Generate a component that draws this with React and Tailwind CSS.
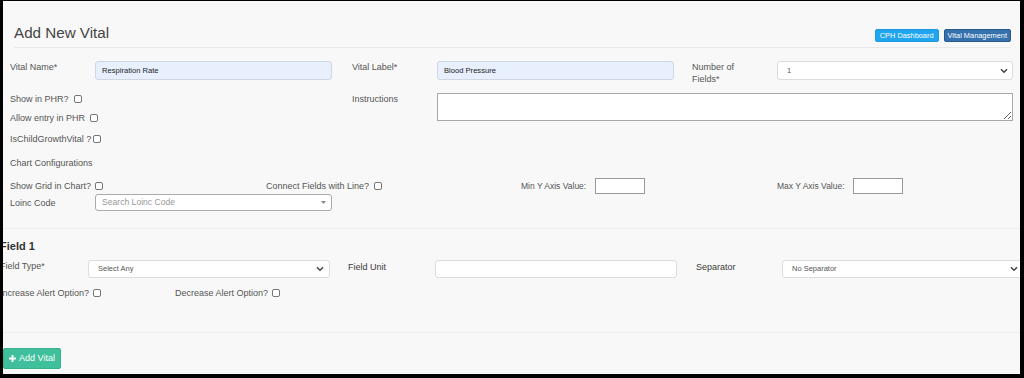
import React from 'react';

const label = 'text-[9px] leading-[12px] text-[#555]';

function Check() {
  return <span className="inline-block w-[8px] h-[8px] border border-[#767676] rounded-[2px] bg-white shrink-0" />;
}

function Chevron() {
  return (
    <svg width="8" height="6" viewBox="0 0 8 6" className="shrink-0">
      <path d="M1 1.2l3 3 3-3" fill="none" stroke="#444" strokeWidth="1.5" />
    </svg>
  );
}

function FakeSelect({ value, width, className = '' }) {
  return (
    <div className={`${width} shrink-0 h-[18px] bg-white border border-[#dcdcdc] rounded-[3px] flex items-center justify-between pl-[9px] pr-[5px] text-[7.5px] text-[#555] ${className}`}>
      <span>{value}</span>
      <Chevron />
    </div>
  );
}

export default function App() {
  return (
    <div className="h-[378px] w-[1024px] bg-black pt-px pl-[3px] pr-[4px] pb-[4px] font-['Liberation_Sans',Arial,sans-serif]">
      <div className="h-full bg-[#f8f8f8] overflow-hidden">
        {/* header */}
        <div className="ml-[11px] mr-[9px] h-[47px] border-b border-[#e9e9e9] flex justify-between items-start">
          <h1 className="mt-[23px] text-[15.2px] leading-[18px] text-[#444]">Add New Vital</h1>
          <div className="mt-[28px] flex gap-[5px]">
            <button className="h-[13px] px-[4px] rounded-[2px] bg-[#21a5ee] border border-[#1d9ae0] text-white text-[7.4px] leading-none">CPH Dashboard</button>
            <button className="h-[13px] px-[3px] rounded-[2px] bg-[#3471ad] border border-[#28598c] text-white text-[7.4px] leading-none">Vital Management</button>
          </div>
        </div>

        {/* row 1 */}
        <div className="mt-[13px] pl-[7px] flex items-start">
          <div className="w-[342px] flex">
            <div className={`w-[85px] ${label}`}>Vital Name*</div>
            <div className="w-[237px] h-[19px] bg-[#e8f0fe] border border-[#cfd7e3] rounded-[3px] flex items-center pl-[6px] text-[7.6px] text-[#222]">Respiration Rate</div>
          </div>
          <div className="w-[340px] flex">
            <div className={`w-[85px] ${label}`}>Vital Label*</div>
            <div className="w-[237px] h-[19px] bg-[#e8f0fe] border border-[#cfd7e3] rounded-[3px] flex items-center pl-[6px] text-[7.6px] text-[#222]">Blood Pressure</div>
          </div>
          <div className="flex">
            <div className={`w-[85px] ${label}`}>Number of<br />Fields*</div>
            <div className="w-[236px] h-[19px] bg-white border border-[#dcdcdc] rounded-[3px] flex items-center justify-between pl-[9px] pr-[4px] text-[7.5px] text-[#555]">
              <span>1</span>
              <Chevron />
            </div>
          </div>
        </div>

        {/* row 2 */}
        <div className="mt-[8px] pl-[7px] flex items-start">
          <div className="w-[342px]">
            <div className={`flex items-center gap-[5px] ${label}`}>Show in PHR? <Check /></div>
            <div className={`mt-[7px] flex items-center gap-[5px] ${label}`}>Allow entry in PHR <Check /></div>
          </div>
          <div className="flex">
            <div className={`w-[85px] ${label}`}>Instructions</div>
            <textarea className="w-[576px] h-[28px] bg-white border border-[#a8a8a8] outline-none" />
          </div>
        </div>

        <div className={`mt-[9px] pl-[7px] flex items-center gap-[2px] ${label}`}>IsChildGrowthVital ? <Check /></div>
        <div className={`mt-[12px] pl-[7px] ${label}`}>Chart Configurations</div>

        {/* chart row */}
        <div className={`mt-[9px] pl-[7px] h-[16px] grid grid-cols-[256px_255px_256px_auto] items-center ${label}`}>
          <div className="flex items-center gap-[4px]">Show Grid in Chart? <Check /></div>
          <div className="flex items-center gap-[5px]">Connect Fields with Line? <Check /></div>
          <div className="flex items-center gap-[9px] text-[8.5px]">Min Y Axis Value: <span className="w-[50px] h-[16px] bg-white border border-[#999]" /></div>
          <div className="flex items-center gap-[8px] text-[8.5px]">Max Y Axis Value: <span className="w-[50px] h-[16px] bg-white border border-[#999]" /></div>
        </div>

        {/* loinc */}
        <div className="pl-[7px] flex items-center">
          <div className={`w-[85px] ${label}`}>Loinc Code</div>
          <div className="w-[237px] h-[17px] bg-white border border-[#aaa] rounded-[3px] flex items-center justify-between pl-[6px] pr-[5px] text-[8.6px] text-[#999]">
            <span>Search Loinc Code</span>
            <svg width="5" height="3" viewBox="0 0 5 3"><path d="M0 0h5L2.5 3z" fill="#888" /></svg>
          </div>
        </div>

        <div className="mt-[17px] border-t border-[#ececec]" />

        {/* field 1 */}
        <div className="ml-[-3px]">
          <h2 className="mt-[11px] text-[11px] leading-[13px] font-bold text-[#333]">Field 1</h2>
          <div className="mt-[7px] flex items-start">
            <div className="w-[348px] shrink-0 flex">
              <div className={`w-[88px] shrink-0 ${label}`}>Field Type*</div>
              <FakeSelect value="Select Any" width="w-[242px]" />
            </div>
            <div className="w-[348px] shrink-0 flex">
              <div className="w-[87px] shrink-0 text-[9px] leading-[12px] text-[#3a3a3a] pt-[1px]">Field Unit</div>
              <div className="w-[242px] shrink-0 h-[18px] bg-white border border-[#dcdcdc] rounded-[3px]" />
            </div>
            <div className="flex shrink-0">
              <div className="w-[86px] shrink-0 text-[9px] leading-[12px] text-[#3a3a3a] pt-[1px]">Separator</div>
              <FakeSelect value="No Separator" width="w-[242px]" />
            </div>
          </div>
          <div className={`mt-[9px] flex items-center ${label}`}>
            <div className="w-[175px] flex items-center gap-[4px]">Increase Alert Option? <Check /></div>
            <div className="flex items-center gap-[4px]">Decrease Alert Option? <Check /></div>
          </div>
        </div>

        <div className="mt-[33px] border-t border-[#ececec]" />

        <button className="mt-[15px] w-[58px] h-[21px] rounded-[2px] bg-[#3fbf9b] border border-[#37b08e] text-white text-[9px] flex items-center justify-center gap-[3px]">
          <svg width="7" height="7" viewBox="0 0 6 6"><path d="M2.2 0h1.6v2.2H6v1.6H3.8V6H2.2V3.8H0V2.2h2.2z" fill="#fff" /></svg>
          Add Vital
        </button>
      </div>
    </div>
  );
}
